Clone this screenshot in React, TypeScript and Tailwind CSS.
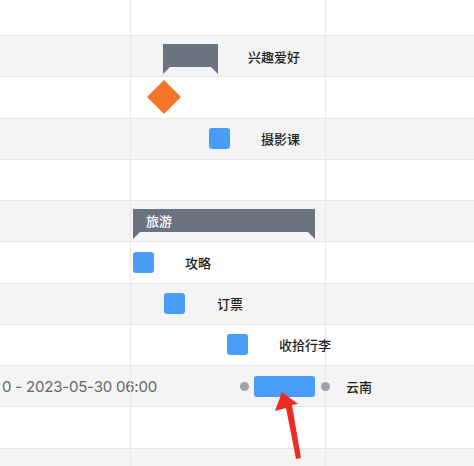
import React from "react";

const cjk = { fontFamily: '"Noto Sans CJK SC", "Noto Sans", sans-serif' };

function Row({ gray, first, children }: { gray?: boolean; first?: boolean; children?: React.ReactNode }) {
  return (
    <div
      className={
        (first ? "h-[35px] " : "h-[41.25px] border-t border-[#e6e6e6] ") +
        (gray ? "bg-[#f4f4f4] " : "bg-white ") +
        "flex items-center shrink-0"
      }
    >
      {children}
    </div>
  );
}

function Square({ ml }: { ml: string }) {
  return <div className={"relative z-10 w-[21px] h-[21px] rounded-[3px] bg-[#4a9df7] shrink-0 " + ml} />;
}

function Label({ text, ml }: { text: string; ml: string }) {
  return (
    <span className={"relative z-10 text-[13px] font-medium leading-none text-[#1e1e1e] whitespace-nowrap " + ml} style={cjk}>
      {text}
    </span>
  );
}

const groupClip =
  "[clip-path:polygon(0_0,100%_0,100%_100%,calc(100%-7px)_calc(100%-7px),7px_calc(100%-7px),0_100%)]";

export default function App() {
  return (
    <div className="relative w-[474px] h-[466px] overflow-hidden bg-white">
      <div className="flex flex-col">
        <Row first />
        <Row gray>
          <div className={"relative z-10 self-start mt-[8px] ml-[163px] w-[55px] h-[30px] bg-[#6b7280] shrink-0 " + groupClip} />
          <Label text="兴趣爱好" ml="ml-[30px]" />
        </Row>
        <Row>
          <div className="relative z-10 ml-[152px] w-[24px] h-[24px] rotate-45 bg-[#f5762a] shrink-0" />
        </Row>
        <Row gray>
          <Square ml="ml-[209px]" />
          <Label text="摄影课" ml="ml-[31px]" />
        </Row>
        <Row />
        <Row gray>
          <div className={"relative z-10 self-start mt-[8px] ml-[133px] w-[182px] h-[30px] bg-[#6b7280] shrink-0 " + groupClip}>
            <span className="block pl-[13px] pt-[4px] text-[13px] font-medium leading-[15px] text-white" style={cjk}>
              旅游
            </span>
          </div>
        </Row>
        <Row>
          <Square ml="ml-[133px]" />
          <Label text="攻略" ml="ml-[31px]" />
        </Row>
        <Row gray>
          <Square ml="ml-[164px]" />
          <Label text="订票" ml="ml-[32px]" />
        </Row>
        <Row>
          <Square ml="ml-[227px]" />
          <Label text="收拾行李" ml="ml-[31px]" />
        </Row>
        <Row gray>
          <div className="w-[130px] shrink-0 overflow-visible">
            <span
              className="block pl-[2px] whitespace-nowrap text-[15px] tracking-[-0.2px] leading-none text-[#666]"
              style={{ fontFamily: 'Inter, "Liberation Sans", sans-serif' }}
            >
              0 - 2023-05-30 06:00
            </span>
          </div>
          <div className="relative z-10 ml-[110px] w-[9px] h-[9px] rounded-full bg-[#9ea3ab] shrink-0" />
          <div className="relative z-10 ml-[5px] w-[61px] h-[21px] rounded-[3px] bg-[#4a9df7] shrink-0" />
          <div className="relative z-10 ml-[6px] w-[9px] h-[9px] rounded-full bg-[#9ea3ab] shrink-0" />
          <Label text="云南" ml="ml-[16px]" />
        </Row>
        <Row />
        <Row gray />
      </div>

      <div className="absolute top-0 bottom-0 left-[130px] w-px bg-[#e8e8e8] z-[5]" />
      <div className="absolute top-0 bottom-0 left-[325px] w-px bg-[#e8e8e8] z-[5]" />

      <svg className="absolute inset-0 z-20 pointer-events-none" width="474" height="466" viewBox="0 0 474 466">
        <polygon
          points="282,392 298,404 292,405 301,458 296,459 286,408 275,411"
          fill="#ee2a24"
        />
      </svg>
    </div>
  );
}
